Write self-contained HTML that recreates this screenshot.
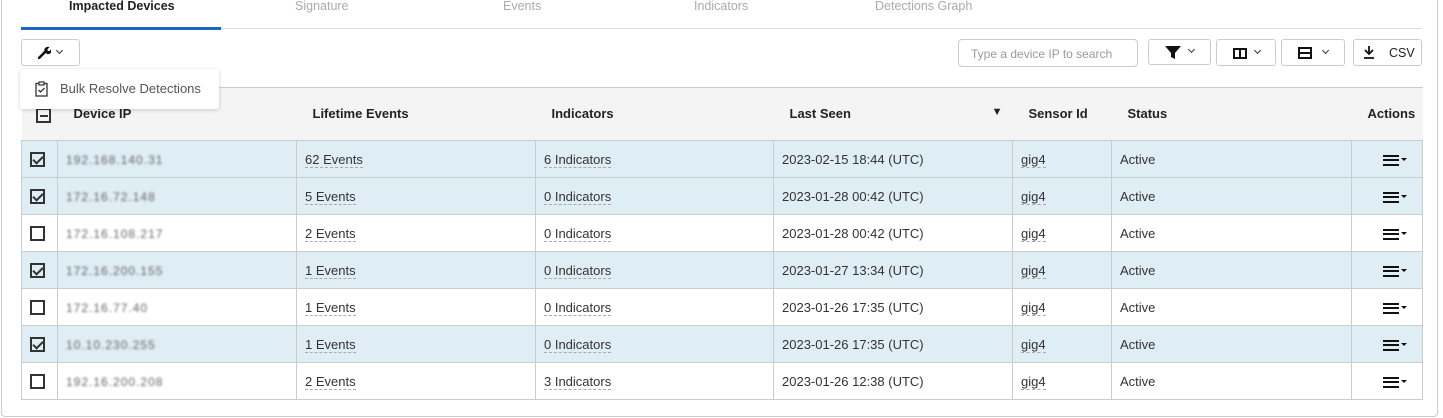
<!DOCTYPE html><html><head><style>
*{box-sizing:border-box;margin:0;padding:0}
body{width:1443px;height:418px;background:#fff;font-family:"Liberation Sans",Arial,sans-serif;position:relative;overflow:hidden;color:#333}
.outer{position:absolute;left:1px;top:-5px;width:1437px;height:422px;border:1px solid #ccc;border-radius:4px}
.tab{position:absolute;top:0;font-size:12.5px;color:#aaa;line-height:12px}
.tabline{position:absolute;left:21px;top:28px;width:1401px;height:1px;background:#ddd}
.act{position:absolute;left:21px;top:27px;width:200px;height:3px;background:#1a66c4}
.btn{position:absolute;top:39px;height:27px;border:1px solid #ccc;border-radius:3px;background:#fff}
.chev{position:absolute;top:8px;width:5px;height:5px;border-right:1.3px solid #333;border-bottom:1.3px solid #333;transform:rotate(45deg)}
table{position:absolute;left:21px;top:87px;width:1402px;border-collapse:collapse;font-size:13px;table-layout:fixed}
th{background:#f4f4f4;height:53px;text-align:left;font-weight:bold;color:#222;border-top:1px solid #ccc;padding-left:16px;padding-bottom:2px}
td{height:37px;border:1px solid #ccc;padding-left:8px;color:#333;padding-top:0}
tr.s td{background:#dfedf4}
.u{border-bottom:1px dashed #aaa}
.cb{display:inline-block;width:15px;height:15px;border:2px solid #333;position:relative;vertical-align:middle}
.cb.c:after{content:"";position:absolute;left:3px;top:0px;width:4px;height:8px;border-right:2px solid #333;border-bottom:2px solid #333;transform:rotate(45deg)}
.ip{color:#666;filter:blur(1px);letter-spacing:1px;font-size:12px}
.menu{display:inline-block;width:16px;height:11px;border-top:2.5px solid #111;border-bottom:2.5px solid #111;position:relative;vertical-align:middle}
.menu:before{content:"";position:absolute;left:0;top:2px;width:16px;height:2.5px;background:#111}
.menu:after{content:"";position:absolute;left:18px;top:1px;border:3px solid transparent;border-top:3px solid #111}
.drop{position:absolute;left:20px;top:69px;width:199px;height:40px;background:#fff;border-radius:3px;box-shadow:0 1px 4px rgba(0,0,0,.18);font-size:13px;color:#555;z-index:2}
</style></head><body>
<div class="outer"></div>
<div class="tab" style="left:69px;color:#222;font-weight:bold">Impacted Devices</div>
<div class="tab" style="left:295px">Signature</div>
<div class="tab" style="left:503px">Events</div>
<div class="tab" style="left:694px">Indicators</div>
<div class="tab" style="left:875px">Detections Graph</div>
<div class="tabline"></div><div class="act"></div>
<div class="btn" style="left:21px;width:59px"><svg style="position:absolute;left:16px;top:6px" width="13" height="13" viewBox="0 0 13 13"><path d="M1 12l6-6" stroke="#111" stroke-width="2.6" stroke-linecap="round"/><path d="M6.5 5.5a3.5 3.5 0 0 1 5-4.2l-2 2 .2 1.6 1.6.2 2-2a3.5 3.5 0 0 1-4.4 4.8z" fill="#111"/></svg><div class="chev" style="left:35px"></div></div>
<div class="drop"><svg style="position:absolute;left:15px;top:12px" width="13" height="16" viewBox="0 0 13 16"><rect x="1" y="2.5" width="11" height="12.5" fill="none" stroke="#333" stroke-width="1.3"/><rect x="4" y="1" width="5" height="3" fill="#fff" stroke="#333" stroke-width="1.2"/><path d="M3.5 9l2 2 4-4" fill="none" stroke="#333" stroke-width="1.3"/></svg><span style="position:absolute;left:40px;top:12px">Bulk Resolve Detections</span></div>
<div class="btn" style="left:958px;width:180px;height:28px;border-radius:4px;font-size:12px;color:#999;padding:7px 12px">Type a device IP to search</div>
<div class="btn" style="left:1148px;width:63px;height:26px"><svg style="position:absolute;left:16px;top:6px" width="16" height="13"><path d="M0 0h16l-6 7v6l-4-2v-4z" fill="#111"/></svg><div class="chev" style="left:40px;top:7px"></div></div>
<div class="btn" style="left:1216px;width:60px"><svg style="position:absolute;left:16px;top:8px" width="14" height="11"><rect x="1" y="1" width="12" height="9" fill="none" stroke="#111" stroke-width="2"/><path d="M7 1v9" stroke="#111" stroke-width="2"/></svg><div class="chev" style="left:38px"></div></div>
<div class="btn" style="left:1281px;width:64px"><svg style="position:absolute;left:16px;top:7px" width="14" height="12"><rect x="1" y="1" width="12" height="10" fill="none" stroke="#111" stroke-width="2"/><path d="M1 6h12" stroke="#111" stroke-width="2"/></svg><div class="chev" style="left:41px"></div></div>
<div class="btn" style="left:1353px;width:69px"><svg style="position:absolute;left:8px;top:5px" width="14" height="15"><path d="M7 1v8M3 5l4 4 4-4M2 13h10" fill="none" stroke="#111" stroke-width="1.8"/></svg><span style="position:absolute;left:35px;top:6px;font-size:12.5px;color:#222">CSV</span></div>
<table>
<colgroup><col style="width:36px"><col style="width:239px"><col style="width:239px"><col style="width:238px"><col style="width:239px"><col style="width:99px"><col style="width:240px"><col></colgroup>
<tr style="height:53px"><th style="padding-left:14px"><span class="cb" style="top:2px"><span style="position:absolute;left:2px;top:5px;width:8px;height:1.5px;background:#333"></span></span></th><th>Device IP</th><th>Lifetime Events</th><th>Indicators</th><th>Last Seen<span style="float:right;margin-right:10px;font-size:11px">▼</span></th><th>Sensor Id</th><th>Status</th><th style="text-align:right;padding-right:10px">Actions</th></tr>
<tr class="s"><td><span class="cb c"></span></td><td><span class="ip">192.168.140.31</span></td><td><span class="u">62 Events</span></td><td><span class="u">6 Indicators</span></td><td>2023-02-15 18:44 (UTC)</td><td><span class="u">gig4</span></td><td>Active</td><td style="text-align:center"><span class="menu"></span></td></tr>
<tr class="s"><td><span class="cb c"></span></td><td><span class="ip">172.16.72.148</span></td><td><span class="u">5 Events</span></td><td><span class="u">0 Indicators</span></td><td>2023-01-28 00:42 (UTC)</td><td><span class="u">gig4</span></td><td>Active</td><td style="text-align:center"><span class="menu"></span></td></tr>
<tr><td><span class="cb"></span></td><td><span class="ip">172.16.108.217</span></td><td><span class="u">2 Events</span></td><td><span class="u">0 Indicators</span></td><td>2023-01-28 00:42 (UTC)</td><td><span class="u">gig4</span></td><td>Active</td><td style="text-align:center"><span class="menu"></span></td></tr>
<tr class="s"><td><span class="cb c"></span></td><td><span class="ip">172.16.200.155</span></td><td><span class="u">1 Events</span></td><td><span class="u">0 Indicators</span></td><td>2023-01-27 13:34 (UTC)</td><td><span class="u">gig4</span></td><td>Active</td><td style="text-align:center"><span class="menu"></span></td></tr>
<tr><td><span class="cb"></span></td><td><span class="ip">172.16.77.40</span></td><td><span class="u">1 Events</span></td><td><span class="u">0 Indicators</span></td><td>2023-01-26 17:35 (UTC)</td><td><span class="u">gig4</span></td><td>Active</td><td style="text-align:center"><span class="menu"></span></td></tr>
<tr class="s"><td><span class="cb c"></span></td><td><span class="ip">10.10.230.255</span></td><td><span class="u">1 Events</span></td><td><span class="u">0 Indicators</span></td><td>2023-01-26 17:35 (UTC)</td><td><span class="u">gig4</span></td><td>Active</td><td style="text-align:center"><span class="menu"></span></td></tr>
<tr><td><span class="cb"></span></td><td><span class="ip">192.16.200.208</span></td><td><span class="u">2 Events</span></td><td><span class="u">3 Indicators</span></td><td>2023-01-26 12:38 (UTC)</td><td><span class="u">gig4</span></td><td>Active</td><td style="text-align:center"><span class="menu"></span></td></tr>
</table>
</body></html>
